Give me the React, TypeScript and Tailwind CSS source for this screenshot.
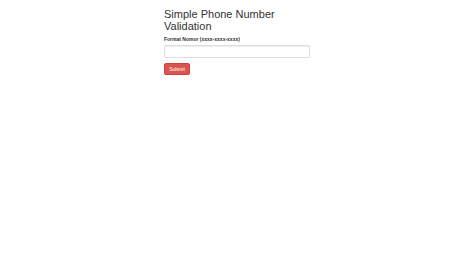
export default function App() {
  return (
    <div className="min-h-[266px] bg-white" style={{ fontFamily: '"Liberation Sans", Arial, sans-serif' }}>
      <div className="ml-[164px] w-[146px] pt-[8px]">
        <h1 className="text-[11px] leading-[12px] text-[#333] font-normal">Simple Phone Number Validation</h1>
        <form className="mt-[4px]">
          <label className="block text-[5px] leading-[6px] font-bold text-[#333]">Format Nomor (xxxx-xxxx-xxxx)</label>
          <input
            type="text"
            className="mt-[3px] block w-[146px] h-[13px] rounded-[2px] border border-[#ddd] bg-white shadow-[inset_0_1px_1px_rgba(0,0,0,0.075)]"
          />
          <button
            type="button"
            className="mt-[5px] block h-[12px] w-[26px] rounded-[2px] bg-[#d9534f] border border-[#d43f3a] text-white text-[5px] leading-none font-normal"
          >
            Submit
          </button>
        </form>
      </div>
    </div>
  );
}
